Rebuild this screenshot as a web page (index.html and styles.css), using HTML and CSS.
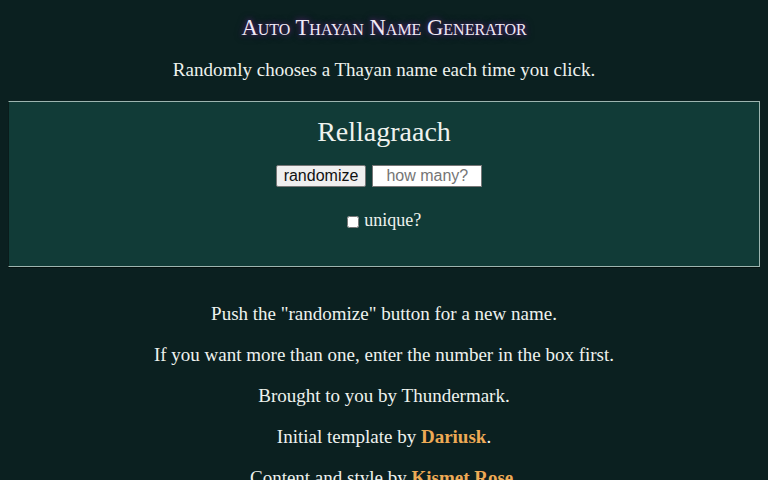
FILE: index.html
```html
<!DOCTYPE html>
<html lang="en">
<head>
  <meta charset="UTF-8" />
  <title>Auto Thayan Name Generator</title>
  <link rel="stylesheet" href="styles.css">
</head>
<body>

  <h1 class="title">Auto Thayan Name Generator</h1>
  <p class="lead">Randomly chooses a Thayan name each time you click.</p>

  <div class="generator">
    <div class="result" id="result">Rellagraach</div>
    <div class="controls">
      <button type="button" id="randomize">randomize</button>
      <input type="text" id="count" placeholder="how many?" />
    </div>
    <div class="options">
      <label class="unique"><input type="checkbox" id="unique" /> unique?</label>
    </div>
  </div>

  <div class="notes">
    <p>Push the "randomize" button for a new name.</p>
    <p>If you want more than one, enter the number in the box first.</p>
    <p>Brought to you by Thundermark.</p>
    <p>Initial template by <a href="#">Dariusk</a>.</p>
    <p>Content and style by <a href="#">Kismet Rose</a>.</p>
  </div>

</body>
</html>
```

FILE: styles.css
```css
body {
  margin: 8px;
  background-color: #0b2020;
  color: #eef2ee;
  font-family: 'Liberation Serif', 'Times New Roman', serif;
  font-size: 19px;
  text-align: center;
}

.title {
  font-size: 22.6px;
  line-height: 26px;
  font-weight: normal;
  font-variant: small-caps;
  color: #f1eaf6;
  text-shadow: 0 0 5px #5a2a7a, 0 0 9px #3a1650;
  margin: 7px 0 0;
}

.lead {
  line-height: 22px;
  margin: 18px 0 20px;
}

.generator {
  background-color: #113b37;
  border: 1px solid #9db5b0;
  border-left-color: #0a1c1b;
  box-shadow: 0 1px 0 #05110f;
  padding: 14px 0 35px;
}

.result {
  font-size: 28px;
  line-height: 32px;
  margin-bottom: 17px;
}

.controls {
  display: flex;
  justify-content: center;
  gap: 6px;
  padding-right: 10px;
}

.controls button {
  font-family: 'Liberation Sans', Arial, sans-serif;
  font-size: 16px;
  height: 22px;
  padding: 0 7px;
  background: #efefef;
  border: 1px solid #767676;
  border-radius: 2px;
  color: #111;
}

.controls input {
  font-family: 'Liberation Sans', Arial, sans-serif;
  font-size: 16px;
  width: 110px;
  height: 22px;
  box-sizing: border-box;
  padding: 0 2px;
  text-align: center;
  border: 1px solid #767676;
}

.options {
  margin-top: 22px;
  line-height: 21px;
}

.unique {
  font-size: 18px;
}

.unique input {
  margin: 0 1px 0 0;
  width: 12px;
  height: 12px;
  vertical-align: -2px;
}

.notes {
  padding-top: 35px;
}

.notes p {
  margin: 0 0 18px;
  line-height: 23px;
}

.notes a {
  color: #eeaa55;
  font-weight: bold;
  text-decoration: none;
}
```
